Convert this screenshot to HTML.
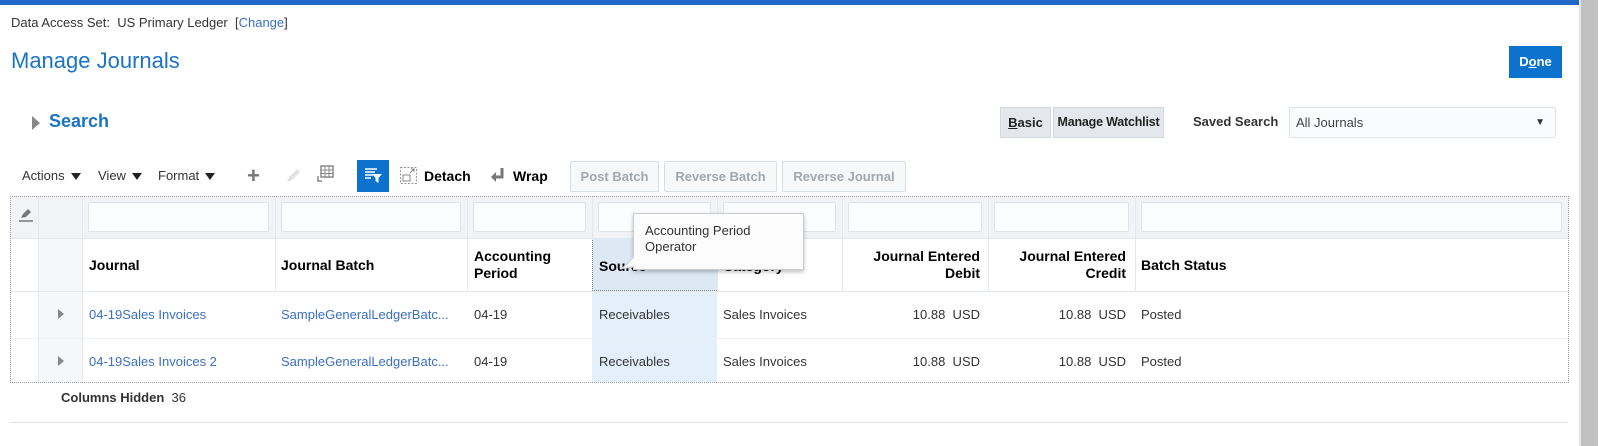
<!DOCTYPE html>
<html><head><meta charset="utf-8"><style>
*{margin:0;padding:0;box-sizing:border-box}
body{width:1600px;height:446px;overflow:hidden;background:#fff;font-family:"Liberation Sans",Arial,sans-serif;font-size:13px;color:#333;position:relative}
.a{position:absolute;white-space:nowrap}
.b{font-weight:bold;color:#000}
.btn{position:absolute;border:1px solid #d6dfe6;border-radius:2px;background:#f7f8fa;color:#a0a7ad;font-weight:bold;font-size:13px;text-align:center;line-height:30px}
.fi{position:absolute;top:202px;height:30px;background:#fcfdfe;border:1px solid #dfe4e9;border-radius:2px}
.vl{position:absolute;width:1px;background:#e3e8ec}
.hl{position:absolute;height:1px;background:#e3e8ec}
.lnk{color:#3a6fc4}
.tri{position:absolute;width:0;height:0;border-top:5px solid transparent;border-bottom:5px solid transparent;border-left:6px solid #888}
.dn{display:inline-block;width:0;height:0;border-left:5px solid transparent;border-right:5px solid transparent;border-top:7px solid #222;margin-left:6px;vertical-align:middle}
</style></head><body>
<div class="a" style="left:0;top:0;width:1579px;height:5px;background:#2168c9"></div>
<div class="a" style="left:1579px;top:0;width:2px;height:446px;background:#e6e6e6"></div>
<div class="a" style="left:1581px;top:0;width:17px;height:446px;background:#c1c1c1"></div>

<div class="a" style="left:11px;top:15px;font-size:13px;color:#333">Data Access Set:&nbsp; US Primary Ledger&nbsp; [<span class="lnk">Change</span>]</div>
<div class="a" style="left:11px;top:48px;font-size:22px;color:#1a73c6">Manage Journals</div>
<div class="a" style="left:1509px;top:46px;width:53px;height:32px;background:#0b72cd;color:#fff;font-weight:bold;font-size:13px;text-align:center;line-height:31px">D<u>o</u>ne</div>

<div class="tri" style="left:32px;top:116px;border-top-width:7px;border-bottom-width:7px;border-left-width:8px"></div>
<div class="a" style="left:49px;top:111px;font-size:18px;font-weight:bold;color:#1a73c6">Search</div>

<div class="a" style="left:1000px;top:107px;width:51px;height:31px;background:#e4e8ec;border:1px solid #d2d8dd;font-weight:bold;color:#222;text-align:center;line-height:29px"><u>B</u>asic</div>
<div class="a" style="left:1053px;top:107px;width:111px;height:31px;background:#e4e8ec;border:1px solid #d2d8dd;font-weight:bold;font-size:12.5px;letter-spacing:-0.2px;color:#222;text-align:center;line-height:29px">Manage Watchlist</div>
<div class="a b" style="left:1193px;top:114px;color:#333">Saved Search</div>
<div class="a" style="left:1289px;top:107px;width:267px;height:31px;background:#fafbfc;border:1px solid #dfe4e9;border-radius:2px;line-height:29px;padding-left:6px;color:#444">All Journals<span style="position:absolute;right:10px;top:0;font-size:10px;color:#333">▼</span></div>

<div class="a" style="left:22px;top:168px;color:#333">Actions<span class="dn"></span></div>
<div class="a" style="left:98px;top:168px;color:#333">View<span class="dn"></span></div>
<div class="a" style="left:158px;top:168px;color:#333">Format<span class="dn"></span></div>
<div class="a" style="left:247px;top:168px;font-size:22px;line-height:16px;font-weight:bold;color:#777">+</div>
<svg class="a" style="left:283px;top:166px" width="20" height="20"><path d="M4 16 L6 11 L14 3 L17 6 L9 14 Z" fill="#e2e2e2"/></svg>
<svg class="a" style="left:315px;top:164px" width="20" height="22"><rect x="6" y="2" width="12" height="11" fill="none" stroke="#888" stroke-width="1.5"/><path d="M6 6H18M6 9.5H18M10 2V13M14 2V13" stroke="#888" stroke-width="1"/><path d="M3 12V17H7" fill="none" stroke="#888" stroke-width="1.5"/></svg>
<div class="a" style="left:357px;top:160px;width:32px;height:32px;background:#0b72cd"></div>
<svg class="a" style="left:362px;top:165px" width="22" height="22"><path d="M3 4H15M3 7H13M3 10H11M3 13H9" stroke="#fff" stroke-width="1.6"/><path d="M10 9H20L16.5 13V18L13.5 16V13Z" fill="#fff"/></svg>
<svg class="a" style="left:399px;top:166px" width="20" height="20"><rect x="1.5" y="1.5" width="16" height="16" fill="none" stroke="#999" stroke-dasharray="2 1.5"/><rect x="4" y="9" width="7" height="6" fill="none" stroke="#888"/><path d="M11 7L15 3M12 3H15V6" fill="none" stroke="#888"/></svg>
<div class="a b" style="left:424px;top:168px;font-size:14px">Detach</div>
<svg class="a" style="left:489px;top:166px" width="18" height="18"><path d="M13 2V11H6" fill="none" stroke="#777" stroke-width="3"/><path d="M2 11L7 6V16Z" fill="#777"/></svg>
<div class="a b" style="left:513px;top:168px;font-size:14px">Wrap</div>
<div class="btn" style="left:570px;top:161px;width:89px;height:31px">Post Batch</div>
<div class="btn" style="left:664px;top:161px;width:113px;height:31px">Reverse Batch</div>
<div class="btn" style="left:782px;top:161px;width:124px;height:31px">Reverse Journal</div>

<!-- table -->
<div class="a" style="left:10px;top:196px;width:1559px;height:187px;border:1px dotted #999"></div>
<div class="a" style="left:11px;top:197px;width:1557px;height:41px;background:#f1f3f6"></div>
<div class="a" style="left:11px;top:238px;width:71px;height:144px;background:#fff"></div>
<div class="a" style="left:38px;top:238px;width:44px;height:144px;background:#f5f7f9"></div>
<div class="a" style="left:592px;top:238px;width:125px;height:53px;background:#dce9f5;border-left:1px dotted #888;border-bottom:1px dotted #888"></div>
<div class="a" style="left:592px;top:292px;width:125px;height:90px;background:#e3f0fc"></div>
<div class="hl" style="left:11px;top:238px;width:1557px"></div>
<div class="hl" style="left:11px;top:291px;width:1557px"></div>
<div class="hl" style="left:11px;top:338px;width:1557px;background:#eef1f4"></div>
<div class="vl" style="left:38px;top:197px;height:185px"></div>
<div class="vl" style="left:82px;top:197px;height:185px"></div>
<div class="vl" style="left:275px;top:197px;height:94px"></div>
<div class="vl" style="left:467px;top:197px;height:94px"></div>
<div class="vl" style="left:592px;top:197px;height:41px"></div>
<div class="vl" style="left:717px;top:197px;height:94px"></div>
<div class="vl" style="left:842px;top:197px;height:94px"></div>
<div class="vl" style="left:988px;top:197px;height:94px"></div>
<div class="vl" style="left:1135px;top:197px;height:94px"></div>
<svg class="a" style="left:17px;top:206px" width="18" height="18"><path d="M4 12L6 8L11 3L14 6L9 11Z" fill="#777"/><path d="M2 15H16" stroke="#777" stroke-width="1.5"/></svg>
<div class="fi" style="left:88px;width:181px"></div>
<div class="fi" style="left:281px;width:180px"></div>
<div class="fi" style="left:473px;width:113px"></div>
<div class="fi" style="left:598px;width:113px"></div>
<div class="fi" style="left:723px;width:113px"></div>
<div class="fi" style="left:848px;width:134px"></div>
<div class="fi" style="left:994px;width:135px"></div>
<div class="fi" style="left:1141px;width:421px"></div>

<div class="a b" style="left:89px;top:257px;font-size:14px">Journal</div>
<div class="a b" style="left:281px;top:257px;font-size:14px">Journal Batch</div>
<div class="a b" style="left:474px;top:248px;font-size:14px;line-height:17px">Accounting<br>Period</div>
<div class="a b" style="left:599px;top:258px;font-size:14px">Source</div>
<div class="a b" style="left:723px;top:258px;font-size:14px">Category</div>
<div class="a b" style="right:620px;top:248px;font-size:14px;line-height:17px;text-align:right">Journal Entered<br>Debit</div>
<div class="a b" style="right:474px;top:248px;font-size:14px;line-height:17px;text-align:right">Journal Entered<br>Credit</div>
<div class="a b" style="left:1141px;top:257px;font-size:14px">Batch Status</div>

<div class="tri" style="left:58px;top:309px"></div>
<div class="tri" style="left:58px;top:356px"></div>
<div class="a lnk" style="left:89px;top:307px">04-19Sales Invoices</div>
<div class="a lnk" style="left:281px;top:307px">SampleGeneralLedgerBatc...</div>
<div class="a" style="left:474px;top:307px">04-19</div>
<div class="a" style="left:599px;top:307px">Receivables</div>
<div class="a" style="left:723px;top:307px">Sales Invoices</div>
<div class="a" style="right:620px;top:307px">10.88&nbsp; USD</div>
<div class="a" style="right:474px;top:307px">10.88&nbsp; USD</div>
<div class="a" style="left:1141px;top:307px">Posted</div>
<div class="a lnk" style="left:89px;top:354px">04-19Sales Invoices 2</div>
<div class="a lnk" style="left:281px;top:354px">SampleGeneralLedgerBatc...</div>
<div class="a" style="left:474px;top:354px">04-19</div>
<div class="a" style="left:599px;top:354px">Receivables</div>
<div class="a" style="left:723px;top:354px">Sales Invoices</div>
<div class="a" style="right:620px;top:354px">10.88&nbsp; USD</div>
<div class="a" style="right:474px;top:354px">10.88&nbsp; USD</div>
<div class="a" style="left:1141px;top:354px">Posted</div>

<!-- tooltip -->
<div class="a" style="left:633px;top:213px;width:171px;height:57px;background:#fcfcfc;border:1px solid #ccc;box-shadow:0 2px 4px rgba(0,0,0,.25);padding:9px 11px;line-height:16px;color:#333;white-space:normal">Accounting Period<br>Operator</div>
<svg class="a" style="left:621px;top:256px" width="14" height="14"><path d="M13 0L0 13L13 11Z" fill="#fcfcfc"/><path d="M13 1L1 12.5L13 11" fill="none" stroke="#ccc"/></svg>

<div class="a" style="left:61px;top:390px;color:#333"><b>Columns Hidden</b>&nbsp; 36</div>
<div class="a" style="left:10px;top:422px;width:1558px;height:1px;background:#dfe3e7"></div>
</body></html>
